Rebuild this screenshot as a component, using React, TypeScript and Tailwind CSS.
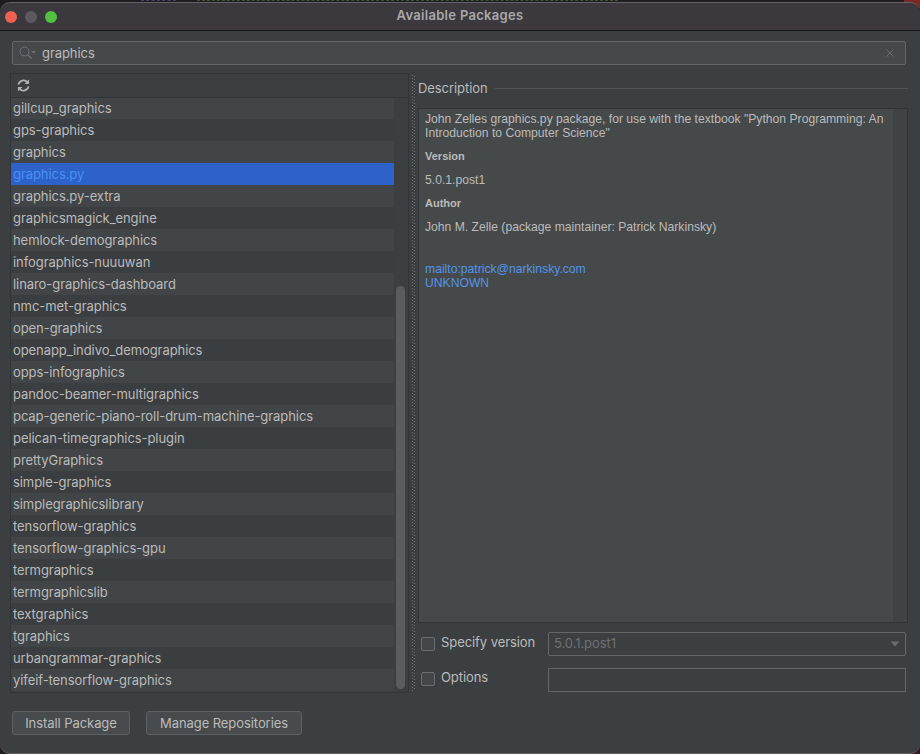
const packages = [
  "gillcup_graphics","gps-graphics","graphics","graphics.py","graphics.py-extra","graphicsmagick_engine","hemlock-demographics","infographics-nuuuwan","linaro-graphics-dashboard","nmc-met-graphics","open-graphics","openapp_indivo_demographics","opps-infographics","pandoc-beamer-multigraphics","pcap-generic-piano-roll-drum-machine-graphics","pelican-timegraphics-plugin","prettyGraphics","simple-graphics","simplegraphicslibrary","tensorflow-graphics","tensorflow-graphics-gpu","termgraphics","termgraphicslib","textgraphics","tgraphics","urbangrammar-graphics","yifeif-tensorflow-graphics",
];

function Row({ name, index }: { name: string; index: number }) {
  const selected = name === "graphics.py";
  const bg = selected ? "bg-[#2d62cb] text-[#4b8ff0]" : index % 2 === 0 ? "bg-[#414547] text-[#bbbbbb]" : "bg-[#3b3e40] text-[#bbbbbb]";
  return <div className={`h-[22px] pl-[2px] leading-[22px] whitespace-nowrap ${bg}`}>{name}</div>;
}

export default function App() {
  return (
    <div className="relative w-[920px] h-[754px] overflow-hidden bg-[#1e1c1f] text-[13px] tracking-[-0.07px] text-[#bbbbbb] [font-family:Inter,'Liberation_Sans',sans-serif]">
      <div className="absolute top-0 right-0 w-[16px] h-[8px] bg-[#7a2a24]" />
      <div className="absolute bottom-0 right-0 w-[10px] h-[6px] bg-[#3a1a20]" />
      <div className="h-[2px] flex items-start">
        <span className="ml-[141px] w-[35px] border-t border-dashed border-[#45456a]" />
        <span className="ml-[21px] w-[421px] border-t border-dashed border-[#3f5530]" />
      </div>
      <div className="relative h-[752px] flex flex-col rounded-[10px] overflow-hidden bg-[#3c3f41] border-t border-b border-t-[#636365] border-b-[#5f6163]">
        <div className="h-[28px] shrink-0 flex items-center relative bg-[#3b383e] border-b border-[#17161a]">
          <div className="flex gap-2 ml-[5px]">
            <span className="w-3 h-3 rounded-full bg-[#ee5f54]" />
            <span className="w-3 h-3 rounded-full bg-[#5b595f]" />
            <span className="w-3 h-3 rounded-full bg-[#52c13f]" />
          </div>
          <span className="absolute left-0 right-0 top-[2px] leading-[20px] text-center text-[13px] tracking-[0.3px] font-semibold text-[#a9a8aa]">Available Packages</span>
        </div>

        <div className="flex-1 flex flex-col">
          <div className="mt-[10px] ml-3 mr-[14px] h-6 shrink-0 flex items-center border border-[#646668] rounded-[2px] bg-[#45494a]">
            <svg width="20" height="16" viewBox="0 0 20 16" fill="none" className="ml-[5px]">
              <circle cx="6.5" cy="6.5" r="4.5" stroke="#6f7274" strokeWidth="1" />
              <path d="M10 10l3.500 3.500" stroke="#6f7274" strokeWidth="1.2" />
              <path d="M13 6h5l-2.500 2.800z" fill="#6f7274" />
            </svg>
            <span className="ml-[4px] pt-[2px] text-[#bbbbbb]">graphics</span>
            <svg width="10" height="10" viewBox="0 0 10 10" className="ml-auto mr-[10px]">
              <path d="M1.500 1.500l7 7M8.500 1.500l-7 7" stroke="#6a6d6f" strokeWidth="1" />
            </svg>
          </div>

          <div className="mt-2 flex pl-[10px] pr-[12px] h-[620px] shrink-0">
            <div className="w-[399px] h-[620px] shrink-0 border border-[#323537] flex flex-col">
              <div className="relative z-10 h-6 shrink-0 flex items-center border-b border-[#323537] pl-[6px]">
                <svg width="13" height="13" viewBox="0 0 14 14" fill="none" stroke="#afb1b3" strokeWidth="1.900">
                  <path d="M1.500 6A5.600 5.600 0 0 1 11.300 3.500" />
                  <path d="M12.500 8A5.600 5.600 0 0 1 2.700 10.500" />
                  <path d="M13 0.500V5.500H8z" fill="#afb1b3" stroke="none" />
                  <path d="M1 13.500V8.500H6z" fill="#afb1b3" stroke="none" />
                </svg>
              </div>
              <div className="flex flex-1 min-h-0 -mt-px">
                <div className="w-[383px] shrink-0">
                  {packages.map((name, i) => <Row key={name} name={name} index={i} />)}
                </div>
                <div className="flex-1 flex flex-col justify-end items-start pl-[2px] pb-[3px]">
                  <div className="w-[9px] h-[403px] rounded-[5px] bg-[#5a5d5f]" />
                </div>
              </div>
            </div>

            <div className="w-[9px] shrink-0 pl-[3px] pt-[2px] flex gap-px">
              <div className="w-px h-[616px] bg-[linear-gradient(#6a6d6f_50%,transparent_50%)] bg-[length:1px_3px]" />
              <div className="w-px h-[615px] mt-px bg-[linear-gradient(#6a6d6f_50%,transparent_50%)] bg-[length:1px_3px]" />
            </div>

            <div className="flex-1 flex flex-col">
              <div className="h-[35px] shrink-0 flex items-center gap-[7px] pb-[4px]">
                <span>Description</span>
                <div className="flex-1 h-px bg-[#505355]" />
              </div>
              <div className="h-[515px] shrink-0 border border-[#323537] flex bg-[#45494a] [font-family:'Liberation_Sans',sans-serif] text-[12.16px] tracking-normal">
                <div className="flex-1 pt-[3px] pl-[6px] pr-[8px] leading-[14px]">
                  <p>John Zelles graphics.py package, for use with the textbook "Python Programming: An Introduction to Computer Science"</p>
                  <p className="mt-[9px] font-bold text-[11px]">Version</p>
                  <p className="mt-[10px]">5.0.1.post1</p>
                  <p className="mt-[9px] font-bold text-[11px]">Author</p>
                  <p className="mt-[10px]">John M. Zelle (package maintainer: Patrick Narkinsky)</p>
                  <p className="mt-[28px] text-[#5394ec]">mailto:patrick@narkinsky.com</p>
                  <p className="text-[#5394ec]">UNKNOWN</p>
                </div>
                <div className="w-[14px] shrink-0 bg-[#3f4345]" />
              </div>
              <div className="mt-[9px] h-6 shrink-0 flex items-center">
                <span className="ml-[3px] w-[14px] h-[14px] rounded-[2px] border border-[#6b6e70] bg-[#43474a]" />
                <span className="ml-[6px] w-[107px] -mt-[2px]">Specify version</span>
                <div className="w-[358px] h-6 flex items-center justify-between rounded-[2px] border border-[#646668] pl-[5px] pr-[5px] text-[#6e7072]">
                  <span>5.0.1.post1</span>
                  <svg width="10" height="6" viewBox="0 0 10 6"><path d="M0.500 0.500h9L5 5.500z" fill="#6a6d6f" /></svg>
                </div>
              </div>
              <div className="mt-3 h-6 shrink-0 flex items-center">
                <span className="ml-[3px] -mt-[2px] w-[14px] h-[14px] rounded-[2px] border border-[#6b6e70] bg-[#43474a]" />
                <span className="ml-[6px] w-[107px] -mt-[4px]">Options</span>
                <div className="w-[358px] h-6 border border-[#646668] bg-[#3c3f41]" />
              </div>
            </div>
          </div>

          <div className="mt-[18px] pl-3 flex gap-4">
            <button className="w-[118px] h-6 pt-[2px] rounded-[3px] border border-[#5e6163] bg-[#484b4d] text-[#bbbbbb]">Install Package</button>
            <button className="w-[156px] h-6 pt-[2px] rounded-[3px] border border-[#5e6163] bg-[#484b4d] text-[#bbbbbb]">Manage Repositories</button>
          </div>
        </div>
      </div>
    </div>
  );
}
